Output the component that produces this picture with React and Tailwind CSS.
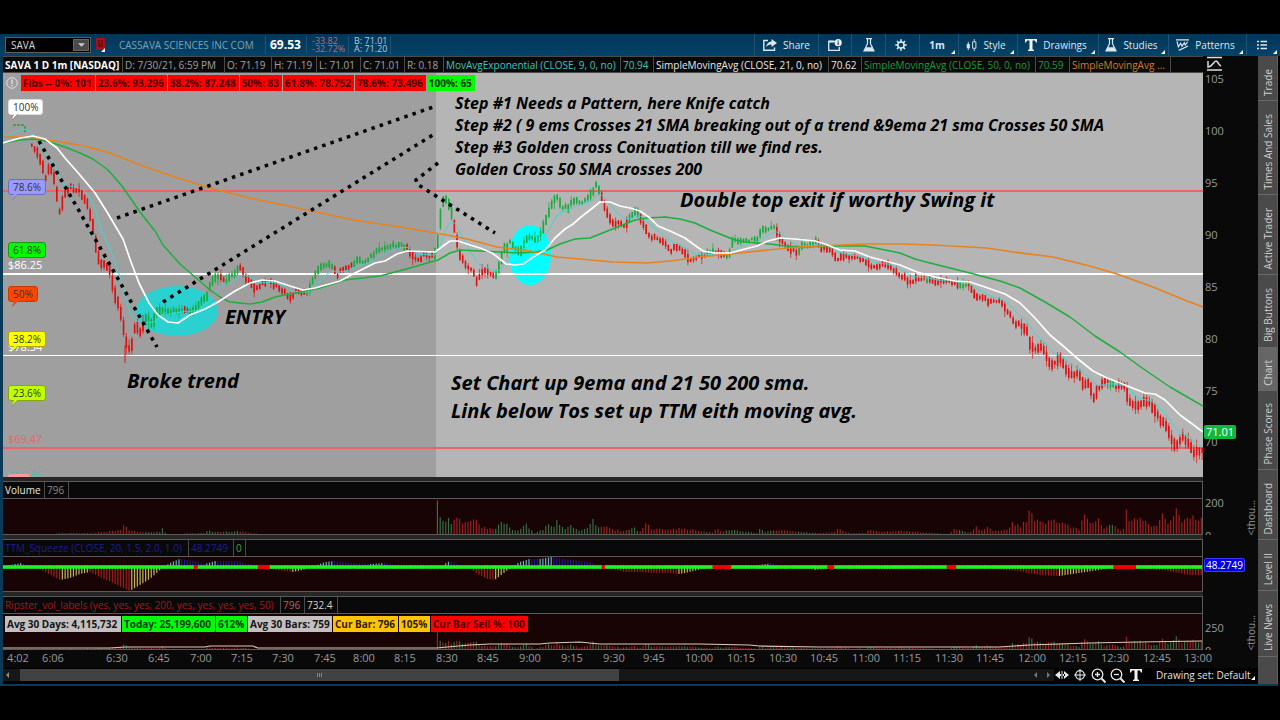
import React from 'react';

// distance between one-minute bars and the edges of the plot
const STEP = 2.78;
const LEFT = 3;
const RIGHT = 1203;

// [x, y, direction] of the price
const PRICE = [
  [32, 146, 'r'], [37, 152, 'r'], [41, 162, 'r'], [46, 178, 'r'], [50, 165, 'r'], [54, 178, 'r'], [57, 195, 'r'], [60, 213, 'r'],
  [64, 195, 'r'], [70, 187, 'r'], [80, 190, 'r'], [84, 200, 'r'], [88, 205, 'r'], [91, 218, 'r'], [94, 232, 'r'], [97, 253, 'r'],
  [101, 263, 'r'], [106, 265, 'r'], [110, 270, 'r'], [114, 290, 'r'], [119, 306, 'r'], [123, 325, 'r'], [126, 340, 'r'],
  [129, 350, 'r'], [132, 345, 'r'], [135, 325, 'r'], [141, 333, 'r'], [145, 320, 'g'], [150, 320, 'g'], [153, 325, 'g'],
  [157, 312, 'g'], [163, 311, 'g'], [175, 311, 'g'], [183, 309, 'r'], [190, 312, 'g'], [196, 308, 'g'], [200, 303, 'g'],
  [207, 296, 'g'], [210, 285, 'g'], [214, 279, 'g'], [220, 275, 'r'], [225, 283, 'g'], [230, 278, 'g'], [235, 273, 'g'],
  [241, 267, 'r'], [245, 278, 'r'], [250, 282, 'r'], [256, 290, 'r'], [262, 283, 'r'], [270, 280, 'r'], [278, 288, 'r'],
  [285, 293, 'r'], [290, 300, 'r'], [296, 290, 'r'], [302, 294, 'r'], [308, 290, 'g'], [313, 280, 'g'], [320, 268, 'g'],
  [328, 264, 'g'], [334, 270, 'r'], [337, 275, 'r'], [345, 268, 'r'], [353, 266, 'g'], [358, 258, 'g'], [364, 262, 'g'],
  [372, 256, 'g'], [380, 249, 'g'], [390, 246, 'g'], [400, 245, 'g'], [407, 247, 'r'], [411, 254, 'r'], [418, 260, 'r'],
  [425, 255, 'r'], [434, 256, 'g'], [438, 240, 'g'], [441, 215, 'g'], [444, 199, 'g'], [448, 202, 'g'], [452, 213, 'g'],
  [455, 230, 'r'], [460, 255, 'r'], [464, 263, 'r'], [469, 268, 'r'], [473, 270, 'r'], [477, 282, 'r'], [482, 272, 'r'],
  [487, 270, 'r'], [495, 277, 'g'], [499, 266, 'g'], [504, 250, 'g'], [510, 243, 'g'], [515, 247, 'g'], [520, 255, 'g'],
  [523, 244, 'g'], [530, 237, 'g'], [536, 240, 'g'], [542, 232, 'g'], [547, 216, 'g'], [552, 204, 'g'], [557, 198, 'g'],
  [562, 208, 'g'], [568, 208, 'g'], [573, 200, 'g'], [580, 203, 'g'], [588, 198, 'g'], [592, 193, 'g'], [596, 185, 'g'],
  [600, 190, 'r'], [604, 205, 'r'], [608, 215, 'r'], [613, 225, 'r'], [618, 222, 'r'], [625, 226, 'r'], [628, 221, 'g'],
  [632, 216, 'g'], [637, 210, 'g'], [640, 217, 'r'], [644, 227, 'r'], [650, 237, 'r'], [658, 238, 'r'], [665, 243, 'r'],
  [670, 252, 'r'], [675, 245, 'r'], [682, 250, 'r'], [690, 260, 'r'], [698, 257, 'r'], [707, 253, 'g'], [715, 252, 'r'],
  [727, 256, 'g'], [730, 251, 'g'], [733, 241, 'g'], [740, 241, 'g'], [745, 240, 'g'], [752, 240, 'g'], [757, 240, 'g'],
  [762, 230, 'g'], [770, 228, 'g'], [776, 228, 'r'], [779, 237, 'r'], [785, 245, 'r'], [792, 250, 'r'], [798, 252, 'g'],
  [803, 244, 'g'], [810, 246, 'g'], [817, 241, 'r'], [822, 248, 'r'], [832, 251, 'r'], [837, 259, 'r'], [845, 255, 'r'],
  [855, 258, 'r'], [865, 261, 'r'], [872, 268, 'r'], [878, 266, 'r'], [886, 264, 'r'], [893, 270, 'r'], [900, 274, 'r'],
  [910, 283, 'r'], [918, 278, 'r'], [926, 279, 'g'], [930, 278, 'r'], [935, 283, 'r'], [945, 280, 'r'], [955, 282, 'r'],
  [961, 287, 'g'], [967, 283, 'r'], [971, 288, 'r'], [976, 298, 'r'], [983, 298, 'r'], [990, 302, 'r'], [1000, 301, 'r'],
  [1005, 307, 'r'], [1010, 315, 'r'], [1015, 323, 'r'], [1020, 324, 'r'], [1027, 332, 'r'], [1031, 347, 'r'], [1037, 348, 'r'],
  [1043, 348, 'r'], [1050, 365, 'r'], [1055, 362, 'r'], [1060, 358, 'r'], [1065, 368, 'r'], [1072, 375, 'r'], [1078, 372, 'r'],
  [1084, 385, 'r'], [1090, 385, 'r'], [1093, 398, 'r'], [1098, 388, 'r'], [1104, 382, 'r'], [1110, 383, 'g'], [1116, 387, 'r'],
  [1124, 385, 'r'], [1129, 400, 'r'], [1137, 408, 'r'], [1144, 400, 'r'], [1150, 402, 'r'], [1157, 415, 'r'], [1165, 425, 'r'],
  [1172, 440, 'r'], [1176, 447, 'r'], [1182, 437, 'r'], [1188, 442, 'r'], [1194, 453, 'r'], [1198, 451, 'r'], [1202, 450, 'r'],
];

const VOLUME = [
  [3, 0], [55, 0], [58, 1], [95, 1], [98, 2], [110, 3], [122, 4], [124, 11], [128, 4], [140, 2], [160, 2], [163, 6], [166, 0],
  [205, 1], [208, 4], [212, 2], [222, 2], [240, 3], [250, 1], [270, 0], [435, 0], [437, 36], [440, 22], [444, 16], [452, 13],
  [456, 17], [460, 14], [470, 12], [476, 14], [480, 8], [490, 6], [495, 4], [503, 14], [508, 9], [515, 3], [520, 4], [526, 11],
  [530, 5], [535, 1], [542, 4], [550, 10], [554, 8], [557, 18], [561, 7], [566, 5], [572, 10], [576, 6], [580, 3], [588, 6],
  [593, 16], [598, 6], [605, 8], [612, 5], [625, 3], [634, 7], [640, 2], [647, 12], [651, 5], [660, 5], [670, 6], [690, 5],
  [700, 3], [714, 1], [717, 7], [720, 3], [735, 4], [758, 1], [761, 7], [764, 2], [778, 4], [790, 3], [815, 1], [835, 2],
  [838, 5], [845, 3], [850, 1], [867, 1], [870, 5], [880, 2], [900, 3], [920, 2], [950, 0], [955, 5], [962, 3], [972, 2],
  [976, 8], [982, 4], [988, 7], [995, 3], [1010, 5], [1014, 12], [1022, 8], [1028, 17], [1031, 24], [1037, 13], [1045, 11],
  [1052, 16], [1060, 11], [1080, 5], [1086, 24], [1092, 10], [1097, 17], [1105, 6], [1112, 11], [1120, 4], [1125, 5],
  [1127, 22], [1131, 11], [1137, 19], [1147, 11], [1157, 7], [1162, 21], [1169, 10], [1177, 25], [1182, 12], [1190, 16], [1203, 18],
];

const MOMENTUM = [
  [3, 0], [15, 3], [22, 4], [30, 1], [38, -1], [60, -13], [70, -11], [80, -7], [90, -5], [100, -10], [115, -17], [130, -24],
  [140, -18], [150, -12], [160, -3], [165, 1], [172, 5], [180, 8], [195, 6], [205, 3], [215, 6], [238, 6], [248, 3], [262, 1],
  [278, -3], [293, -5], [303, -3], [312, 0], [325, 5], [335, 6], [350, 4], [370, 3], [385, 4], [400, 1], [440, 0], [450, 6],
  [460, 2], [470, -1], [478, -7], [488, -12], [495, -13], [503, -7], [512, 0], [520, 5], [530, 8], [540, 8], [552, 10],
  [565, 8], [580, 6], [590, 5], [602, 0], [610, -1], [625, -5], [640, -5], [655, -6], [670, -6], [680, -7], [690, -5],
  [710, 0], [730, 2], [745, 2], [760, 2], [772, 4], [780, 1], [800, -1], [815, -3], [840, 0], [850, -2], [880, -2], [920, -1],
  [960, 0], [1000, -2], [1020, -4], [1040, -8], [1060, -9], [1080, -6], [1100, -3], [1115, 0], [1140, -1], [1165, -3],
  [1180, -6], [1190, -8], [1203, -8],
];

const SQUEEZED = [[194, 198], [259, 270], [602, 605], [713, 732], [829, 835], [949, 957], [1115, 1137]];

const SMA21 =
  '3,143 20,138 33,136 45,139 57,148 65,158 80,175 95,193 107,212 123,239 131,262 139,283 149,303 158,315 168,322 178,323 190,315 205,309 218,302 235,291 250,283 262,280 275,281 290,286 303,290 315,288 340,281 355,273 367,267 375,263 385,261 397,254 407,251 435,252 443,246 450,241 458,241 470,245 480,248 492,253 500,259 506,264 515,265 523,264 533,257 545,250 555,238 565,229 573,224 581,217 590,210 600,202 610,202 620,206 630,208 640,211 650,218 658,226 670,231 685,238 693,244 703,251 715,253 730,253 745,249 757,246 768,241 780,238 795,239 815,241 825,244 840,250 855,251 870,257 885,261 900,265 917,272 935,277 955,281 970,282 985,287 1005,294 1020,303 1035,318 1050,335 1062,345 1078,359 1093,371 1105,377 1120,383 1135,389 1145,393 1155,394 1165,400 1180,415 1195,426 1203,432';
const SMA50 =
  '3,143 20,140 35,139 50,142 65,147 80,153 93,159 108,170 122,186 140,212 155,231 163,245 180,264 195,277 210,290 220,297 230,302 250,304 262,302 275,297 295,293 320,288 345,280 380,276 410,268 438,260 450,253 460,250 480,251 500,252 520,253 535,252 547,250 560,244 575,239 590,238 605,232 620,226 635,220 647,218 665,217 680,219 695,223 710,230 725,236 735,240 745,242 770,244 785,246 800,247 840,246 865,246 885,250 900,253 915,259 930,263 950,268 970,273 1000,281 1020,288 1045,302 1070,317 1095,336 1120,352 1145,370 1170,387 1203,406';
const SMA200 =
  '3,137 30,137 55,141 85,146 110,153 140,165 175,177 210,188 250,198 307,210 353,220 400,227 447,235 467,239 497,247 530,251 557,257 580,259 613,262 647,263 670,261 700,257 730,254 767,250 800,247 840,245 867,244 900,244 933,245 987,248 1013,252 1053,257 1090,266 1117,274 1153,287 1187,301 1203,307';
const VOL_AVG =
  '3,649 110,649 125,648 205,648 210,647 253,647 258,649 437,649 470,646 490,645 540,645 550,644 580,643 600,645 700,645 750,646 760,647 820,648 1000,648 1030,646 1060,645 1090,644 1140,643 1203,642';

const noise = (i) => {
  const n = Math.sin(i * 127.1) * 43758.5453;
  return n - Math.floor(n);
};

const sample = (points, x) => {
  let i = 1;
  while (i < points.length - 1 && points[i][0] < x) i++;
  const [x0, y0] = points[i - 1];
  const [x1, y1] = points[i];
  const t = Math.min(1, Math.max(0, (x - x0) / (x1 - x0)));
  return y0 + (y1 - y0) * t;
};

const directionAt = (x) => {
  let dir = 'r';
  for (const p of PRICE) {
    if (p[0] <= x + 1) dir = p[2];
  }
  return dir;
};

const BARS = [];
for (let i = 0; LEFT + 1 + i * STEP < RIGHT; i++) BARS.push(LEFT + 1 + i * STEP);

const CANDLES = BARS.filter((x) => x > 30).map((x, i) => {
  const y = sample(PRICE, x);
  const slope = Math.abs(sample(PRICE, x + 2) - sample(PRICE, x - 2));
  const wild = x > 1020 || (x > 95 && x < 160) ? 2 : 0;
  const body = 0.8 + noise(i) * 2.4 + slope / 4 + wild * noise(i + 3);
  const wick = noise(i + 7) > 0.75 ? 6 : 2;
  return {
    x,
    y: y + (noise(i + 50) - 0.5) * 3,
    body,
    top: body + noise(i + 9) * (wick + wild),
    bottom: body + noise(i + 13) * (wick + wild),
    dir: directionAt(x),
  };
});

// 9 bar exponential average of the candles
const EMA9 = CANDLES.reduce((acc, c) => {
  const prev = acc.length ? acc[acc.length - 1][1] : 130;
  acc.push([c.x, prev + (c.y - prev) * 0.2]);
  return acc;
}, [])
  .map(([x, y]) => `${x.toFixed(1)},${y.toFixed(1)}`)
  .join(' ');

const infoCells = [
  { text: 'SAVA 1 D 1m [NASDAQ]', cls: 'text-white font-bold w-[120px]' },
  { text: 'D: 7/30/21, 6:59 PM', cls: 'text-[#a0a0a0] w-[102px]' },
  { text: 'O: 71.19', cls: 'text-[#a0a0a0] w-[47px]' },
  { text: 'H: 71.19', cls: 'text-[#a0a0a0] w-[45px]' },
  { text: 'L: 71.01', cls: 'text-[#a0a0a0] w-[44px]' },
  { text: 'C: 71.01', cls: 'text-[#a0a0a0] w-[44px]' },
  { text: 'R: 0.18', cls: 'text-[#a0a0a0] w-[39px]' },
  { text: 'MovAvgExponential (CLOSE, 9, 0, no)', cls: 'text-[#3fc4bd] w-[177px]' },
  { text: '70.94', cls: 'text-[#3fc4bd] w-[33px]' },
  { text: 'SimpleMovingAvg (CLOSE, 21, 0, no)', cls: 'text-[#e8e8e8] w-[175px]' },
  { text: '70.62', cls: 'text-[#e8e8e8] w-[33px]' },
  { text: 'SimpleMovingAvg (CLOSE, 50, 0, no)', cls: 'text-[#1f9a3c] w-[174px]' },
  { text: '70.59', cls: 'text-[#1f9a3c] w-[34px]' },
  { text: 'SimpleMovingAvg ...', cls: 'text-[#d07c22] w-[101px]' },
];

const fibs = [
  { text: 'Fibs -- 0%: 101', cls: 'bg-[#fe0000] text-[#4a0000]' },
  { text: '23.6%: 93.296', cls: 'bg-[#fe0000] text-[#4a0000]' },
  { text: '38.2%: 87.248', cls: 'bg-[#fe0000] text-[#4a0000]' },
  { text: '50%: 83', cls: 'bg-[#fe0000] text-[#4a0000]' },
  { text: '61.8%: 78.752', cls: 'bg-[#fe0000] text-[#4a0000]' },
  { text: '78.6%: 73.496', cls: 'bg-[#fe0000] text-[#4a0000]' },
  { text: '100%: 65', cls: 'bg-[#00fe00] text-[#063806]' },
];

const bubbles = [
  { text: '100%', cls: 'top-[26px] bg-white border-[#dddddd]', fill: '#ffffff' },
  { text: '78.6%', cls: 'top-[106px] bg-[#9a9afc] border-[#6d6dc4]', fill: '#9a9afc' },
  { text: '61.8%', cls: 'top-[169px] bg-[#00fa00] border-[#159a15]', fill: '#00fa00' },
  { text: '50%', cls: 'top-[213px] bg-[#ff4500] border-[#c83a06]', fill: '#ff4500' },
  { text: '38.2%', cls: 'top-[258px] bg-[#ffff00] border-[#b0a800]', fill: '#ffff00' },
  { text: '23.6%', cls: 'top-[312px] bg-[#c0ff00] border-[#84a810]', fill: '#c0ff00' },
];

const tabs = [
  { name: 'Trade', cls: 'h-[45px]' },
  { name: 'Times And Sales', cls: 'h-[94px]' },
  { name: 'Active Trader', cls: 'h-[80px]' },
  { name: 'Big Buttons', cls: 'h-[73px]' },
  { name: 'Chart', cls: 'h-[43px]', active: true },
  { name: 'Phase Scores', cls: 'h-[79px]' },
  { name: 'Dashboard', cls: 'h-[70px]' },
  { name: 'Level II', cls: 'h-[51px]' },
  { name: 'Live News', cls: 'h-[66px]' },
];

const times = [
  ['4:02', 18], ['6:06', 53], ['6:30', 117], ['6:45', 159], ['7:00', 201], ['7:15', 242], ['7:30', 283], ['7:45', 325],
  ['8:00', 364], ['8:15', 405], ['8:30', 447], ['8:45', 488], ['9:00', 530], ['9:15', 572], ['9:30', 614], ['9:45', 654],
  ['10:00', 699], ['10:15', 741], ['10:30', 783], ['10:45', 824], ['11:00', 866], ['11:15', 907], ['11:30', 949],
  ['11:45', 990], ['12:00', 1032], ['12:15', 1073], ['12:30', 1115], ['12:45', 1157], ['13:00', 1198],
];

const prices = [105, 100, 95, 90, 85, 80, 75, 70];

const Corner = () => (
  <svg viewBox="0 0 4 4" className="absolute right-[3px] bottom-[2px] size-1" aria-hidden="true">
    <path d="M4 0V4H0Z" fill="#fff" />
  </svg>
);

const ShareIcon = () => (
  <svg viewBox="0 0 14 12" className="w-[14px] h-3" fill="none" stroke="#dbe7ef" aria-hidden="true">
    <path d="M5 1.500H.8v9.700h10.700V8.500" strokeWidth="1.400" />
    <path d="M8.500 0L14 4L8.500 8V5.600C6 5.500 4.300 6.300 3.200 8.500C3.400 4.800 5.300 2.600 8.500 2.400z" fill="#dbe7ef" stroke="none" />
  </svg>
);

const FlaskIcon = () => (
  <svg viewBox="0 0 12 14" className="w-3 h-[14px]" fill="none" stroke="#dbe7ef" aria-hidden="true">
    <path d="M3 .7h6M4.500 .7v5L1 13h10L7.500 5.700v-5" strokeWidth="1.200" />
    <path d="M3 9.200h6l2 3.800H1z" fill="#dbe7ef" stroke="none" />
  </svg>
);

const GearIcon = () => (
  <svg viewBox="0 0 14 14" className="size-3" fill="none" stroke="#e6eef4" aria-hidden="true">
    <circle cx="7" cy="7" r="3.600" strokeWidth="1.800" />
    <path d="M7 .3v3M7 10.700v3M.3 7h3M10.700 7h3M2.300 2.300l2 2M9.700 9.700l2 2M2.300 11.700l2-2M9.700 4.300l2-2" strokeWidth="1.800" />
  </svg>
);

const NoteIcon = () => (
  <svg viewBox="0 0 14 12" className="w-[14px] h-3" fill="none" stroke="#dbe7ef" aria-hidden="true">
    <path d="M7 2.500H.7v8.800h10.600V8" strokeWidth="1.300" />
    <path d="M.7 2.500h5" strokeWidth="2" />
    <circle cx="10.200" cy="3.700" r="3.600" fill="#e6eef4" stroke="none" />
    <path d="M10.200 1.500v1M10.200 3.200v2.600" stroke="#053c5f" strokeWidth="1.200" />
  </svg>
);

const StyleIcon = () => (
  <svg viewBox="0 0 12 14" className="w-[11px] h-[13px]" fill="none" stroke="#dbe7ef" aria-hidden="true">
    <path d="M2.500 3v9M9 0v3M9 10v3" />
    <path d="M.8 5.500h3.400v4.500H.8z" fill="#dbe7ef" stroke="none" />
    <path d="M7.200 3h3.600v7H7.200z" />
  </svg>
);

const TextIcon = () => (
  <svg viewBox="0 0 12 12" className="size-3" fill="#f2f2f2" aria-hidden="true">
    <path d="M0 0h12v3.600h-1.100C10.700 2 10.200 1.400 8.600 1.400H7.500v8.400c0 .8.4 1 1.500 1V12H3v-1.200c1.100 0 1.500-.2 1.500-1V1.400H3.400C1.800 1.400 1.300 2 1.100 3.600H0z" />
  </svg>
);

const PatternIcon = () => (
  <svg viewBox="0 0 14 13" className="w-[13px] h-3" fill="none" stroke="#dbe7ef" aria-hidden="true">
    <path d="M0 1h14M3 12.300L13 7.500" strokeWidth="1.300" />
    <path d="M1 2.500l1.500 6L5 4.500l1.500 3.300L9 4l1 2.500L12.500 3" strokeWidth="1.300" />
  </svg>
);

const ListIcon = () => (
  <svg viewBox="0 0 10 10" className="size-[10px]" stroke="#dbe7ef" aria-hidden="true">
    <path d="M0 1.500h2M3.500 1.500H10M0 5h2M3.500 5H10M0 8.500h2M3.500 8.500H10" strokeWidth="1.300" />
  </svg>
);

const tools = [
  { label: 'Share', cls: 'w-[64px]', icon: <ShareIcon />, text: 'Share' },
  { label: 'Notes', cls: 'w-[33px]', icon: <NoteIcon /> },
  { label: 'Studies quick list', cls: 'w-[34px]', icon: <FlaskIcon /> },
  { label: 'Settings', cls: 'w-[34px] pr-1', icon: <GearIcon /> },
  { label: 'Time frame', cls: 'w-[39px] pr-1 font-bold', text: '1m', menu: true },
  { label: 'Style', cls: 'w-[59px] pr-1', icon: <StyleIcon />, text: 'Style', menu: true },
  { label: 'Drawings', cls: 'w-[81px] pr-1', icon: <TextIcon />, text: 'Drawings', menu: true },
  { label: 'Studies', cls: 'w-[70px] pr-1', icon: <FlaskIcon />, text: 'Studies', menu: true },
  { label: 'Patterns', cls: 'w-[78px] pr-1', icon: <PatternIcon />, text: 'Patterns', menu: true },
  { label: 'Menu', cls: 'w-[34px] pr-1', icon: <ListIcon />, menu: true },
];

const Header = () => (
  <header className="flex h-[22px] items-center bg-linear-to-b from-[#033656] to-[#04436a]">
    <div className="ml-[5px] flex h-4 w-[86px] items-center border border-[#5d5d5d] bg-black">
      <input
        aria-label="Symbol"
        defaultValue="SAVA"
        className="w-0 flex-1 bg-transparent pl-[5px] text-[10px] text-[#d8d8d8] outline-none"
      />
      <button aria-label="Choose symbol" className="mr-px flex h-3 w-4 items-center justify-center border border-[#666] bg-[#4a4a4a]">
        <svg viewBox="0 0 8 4" className="w-[7px] h-1" fill="#ccc"><path d="M0 0h8L4 4z" /></svg>
      </button>
    </div>
    <button aria-label="Link color" className="relative ml-1 h-[18px] w-[15px]">
      <svg viewBox="0 0 15 18" className="size-full">
        <rect x="1" y="2" width="9" height="12" rx="1" fill="#a11219" />
        <path d="M4 4v5a1.500 1.500 0 0 0 3 0V4" fill="none" stroke="#5a0a10" strokeWidth="1.300" />
        <path d="M10 12v4H6z" fill="#fff" />
      </svg>
    </button>
    <span className="ml-[9px] w-[146px] text-[10px] whitespace-nowrap text-[#7fa0b5]">CASSAVA SCIENCES INC COM</span>
    <span className="flex h-[18px] w-[42px] items-center border-x border-[#1f5273] pl-1 text-[12px] font-bold text-white">69.53</span>
    <span className="flex h-[18px] w-[42px] flex-col justify-center border-r border-[#1f5273] pl-[5px] text-[9px] leading-[8px] text-[#b96a88]">
      <span>-33.82</span>
      <span>-32.72%</span>
    </span>
    <span className="flex h-[18px] w-[42px] flex-col justify-center border-r border-[#1f5273] pl-[5px] text-[9px] leading-[8px] text-[#b9cbd8]">
      <span>B: 71.01</span>
      <span>A: 71.20</span>
    </span>
    <div className="flex-1" />
    {tools.map((t) => (
      <button
        key={t.label}
        aria-label={t.label}
        className={`relative flex h-full items-center justify-center gap-[6px] border-l border-[#1f5273] text-[10px] text-[#dbe7ef] ${t.cls}`}
      >
        {t.icon}
        {t.text && <span>{t.text}</span>}
        {t.menu && <Corner />}
      </button>
    ))}
  </header>
);

const PriceChart = () => (
  <svg viewBox="3 73 1200 404" preserveAspectRatio="none" className="absolute inset-0 size-full" aria-label="SAVA price chart">
    <rect x="3" y="73" width="433" height="404" fill="#9f9f9f" />
    <rect x="436" y="73" width="767" height="404" fill="#b5b5b5" />
    <ellipse cx="177" cy="311" rx="41" ry="25" fill="#2bd0d0" />
    <ellipse cx="530" cy="255" rx="21" ry="30" fill="#00ffff" />
    <path d="M3 191h1200M3 448h1200" stroke="#ea6468" strokeWidth="2" />
    <path d="M3 274h1200" stroke="#fff" strokeWidth="2" />
    <path d="M3 355.500h1200" stroke="#fff" strokeWidth="1" />
    {CANDLES.map((c) => {
      const color = c.dir === 'g' ? '#12ad3a' : '#e01010';
      return (
        <g key={c.x}>
          <path d={`M${c.x} ${c.y - c.top}V${c.y + c.bottom}`} stroke={color} strokeWidth="0.700" />
          <rect x={c.x - 0.8} y={c.y - c.body} width="1.600" height={c.body * 2} fill={color} />
        </g>
      );
    })}
    <path d="M125 345v18" stroke="#e01010" />
    <path d="M13 125h11M25 126v6" stroke="#17a83c" strokeWidth="1.500" strokeDasharray="3 1" />
    <g fill="none" strokeLinejoin="round">
      <polyline points="3,137 15,132 24,129 32,132" stroke="#3fd6d2" />
      <polyline points={EMA9} stroke="#3fd6d2" />
      <polyline points={SMA50} stroke="#1fae3c" strokeWidth="1.500" />
      <polyline points={SMA200} stroke="#e8821e" strokeWidth="1.700" />
      <polyline points={SMA21} stroke="#fff" strokeWidth="1.700" />
    </g>
    <g fill="none" stroke="#000" strokeWidth="3.500" strokeDasharray="3.500 5.200">
      <path d="M117 218L436 106" />
      <path d="M163 302L436 133" />
      <path d="M438 163L416 180L417 184L495 233" />
      <path d="M39 141L157 347" />
    </g>
  </svg>
);

const VolumeBars = ({ base, top, height, scale, mixed }) => (
  <svg viewBox={`3 ${top} 1200 ${height}`} preserveAspectRatio="none" className="block size-full" aria-hidden="true">
    {BARS.map((x, i) => {
      const h = sample(VOLUME, x) * (0.75 + noise(i) * 0.4) * scale;
      if (h < 0.5) return null;
      const green = mixed ? noise(i + 31) > 0.6 : directionAt(x) === 'g';
      return <rect key={x} x={x - 0.5} y={base - h} width="1.200" height={h} fill={green ? '#356e43' : '#98211f'} />;
    })}
    {mixed && <polyline points={VOL_AVG} fill="none" stroke="#d8ccb8" strokeWidth="1.200" />}
  </svg>
);

const momentumColor = (x, v) => {
  const rising = sample(MOMENTUM, x + 2) > sample(MOMENTUM, x - 2);
  if (v > 0) return rising ? '#5fb4c8' : '#1a1a96';
  return rising ? '#c3b75a' : '#9c1f1c';
};

const SqueezePlot = () => (
  <svg viewBox="3 557 1200 34" preserveAspectRatio="none" className="block size-full" aria-hidden="true">
    {BARS.map((x) => {
      const v = sample(MOMENTUM, x);
      return <rect key={x} x={x - 0.6} y={v > 0 ? 567 - v : 567} width="1.200" height={Math.abs(v)} fill={momentumColor(x, v)} />;
    })}
    <path d="M4 567H1201" stroke="#1fd81f" strokeWidth="2.500" />
    {BARS.map((x) => (
      <circle key={x} cx={x} cy="567" r="2" fill={SQUEEZED.some(([a, b]) => x >= a && x <= b) ? '#f00000' : '#22f022'} />
    ))}
    {SQUEEZED.map(([a, b]) => (
      <path key={a} d={`M${a} 567H${b}`} stroke="#f00000" strokeWidth="3.500" />
    ))}
  </svg>
);

const Cells = ({ cells }) => (
  <div className="flex h-4 items-center text-[10px] leading-4 whitespace-nowrap">
    {cells.map(([text, cls]) => (
      <span key={text} className={`h-full border-r border-[#4a4a4a] pl-[2px] ${cls}`}>{text}</span>
    ))}
  </div>
);

const Panel = ({ cells, plot, axis, plotCls }) => (
  <section className="flex">
    <div className="min-w-0 flex-1 border-t border-r border-[#5a5a5a] bg-[#090909]">
      <Cells cells={cells} />
      <div className={`border-y border-[#5a5a5a] bg-[#180404] ${plotCls}`}>{plot}</div>
    </div>
    <div className="relative w-[55px] text-[11px] text-[#9a9a9a]">{axis}</div>
  </section>
);

const Gap = () => <div className="mr-[55px] h-1 bg-[#262626]" />;

const ThouLabel = () => (
  <span className="absolute right-0 bottom-0 rotate-180 text-[10px] leading-[14px] [writing-mode:vertical-rl]">{'<thou...'}</span>
);

const volLabels = [
  { text: 'Avg 30 Days: 4,115,732', cls: 'bg-[#c4c0c2] text-[#141414] w-[116px]' },
  { text: 'Today: 25,199,600', cls: 'bg-[#00fc06] text-[#06400a] w-[93px]' },
  { text: '612%', cls: 'bg-[#00fc06] text-[#06400a] w-[31px]' },
  { text: 'Avg 30 Bars: 759', cls: 'bg-[#c4c0c2] text-[#141414] w-[84px]' },
  { text: 'Cur Bar: 796', cls: 'bg-[#ffc300] text-[#2c2000] w-[65px]' },
  { text: '105%', cls: 'bg-[#ffc300] text-[#2c2000] w-[31px]' },
  { text: 'Cur Bar Sell %: 100', cls: 'bg-[#fe0000] text-[#4a0000] w-[97px]' },
];

const Footer = () => (
  <footer className="flex h-[14px] items-center bg-black text-[#e0e0e0]">
    <div className="flex h-3 flex-1 items-center bg-[#171717]">
      <button aria-label="Scroll left" className="flex w-[17px] justify-start pl-[3px]">
        <svg viewBox="0 0 3 6" className="w-[3px] h-[6px]" fill="#888"><path d="M3 0v6L0 3z" /></svg>
      </button>
      <div className="flex h-full w-[57%] items-center justify-center gap-px bg-[#424242]">
        <i className="h-1 w-px bg-[#888]" />
        <i className="h-1 w-px bg-[#888]" />
        <i className="h-1 w-px bg-[#888]" />
      </div>
      <div className="flex-1" />
      <button aria-label="Step left" className="mr-[10px]">
        <svg viewBox="0 0 3 6" className="w-[3px] h-[6px]" fill="#777"><path d="M3 0v6L0 3z" /></svg>
      </button>
      <button aria-label="Step right" className="mr-1">
        <svg viewBox="0 0 3 6" className="w-[3px] h-[6px]" fill="#777"><path d="M0 0v6l3-3z" /></svg>
      </button>
    </div>
    <div className="relative flex h-full w-[204px] items-center">
      <button aria-label="Pan" className="w-[18px]">
        <svg viewBox="0 0 14 10" className="ml-px h-[10px] w-[14px]" fill="#e8e8e8">
          <path d="M0 5l5-4v8zM14 5L9 1v8zM4 4h6v2H4z" />
          <path d="M7 0v10" stroke="#000" strokeWidth="2" />
          <path d="M7 1v8" stroke="#e8e8e8" strokeWidth="1" />
        </svg>
      </button>
      <button aria-label="Crosshair" className="w-[17px]">
        <svg viewBox="0 0 12 12" className="ml-[2px] size-3" fill="none" stroke="#e8e8e8">
          <circle cx="6" cy="6" r="4.300" strokeWidth="1.200" />
          <path d="M6 0v12M0 6h12" />
        </svg>
      </button>
      <button aria-label="Zoom in" className="w-[19px]">
        <svg viewBox="0 0 15 15" className="ml-[2px] size-[15px]" fill="none" stroke="#e8e8e8" strokeWidth="1.300">
          <circle cx="6.500" cy="6.500" r="5.300" />
          <path d="M10.500 10.500l4 4" strokeWidth="2" />
          <path d="M4 6.500h5M6.500 4v5" />
        </svg>
      </button>
      <button aria-label="Zoom out" className="w-[18px]">
        <svg viewBox="0 0 15 15" className="ml-[2px] size-[15px]" fill="none" stroke="#e8e8e8" strokeWidth="1.300">
          <circle cx="6.500" cy="6.500" r="5.300" />
          <path d="M10.500 10.500l4 4" strokeWidth="2" />
          <path d="M4 6.500h5" />
        </svg>
      </button>
      <button aria-label="Text tool" className="ml-1"><TextIcon /></button>
      <button className="ml-[14px] text-[10px] leading-[14px] whitespace-nowrap">Drawing set: Default</button>
      <Corner />
    </div>
  </footer>
);

export default function App() {
  return (
    <div className="flex min-h-screen flex-col bg-black py-[34px] font-['Open_Sans',sans-serif]">
      <Header />
      <div className="mr-[2px] flex flex-1 border-b-2 border-l-[3px] border-[#0a3a57] bg-[#090909]">
        <main className="flex min-w-0 flex-1 flex-col">
          <div className="flex h-[17px] text-[10px] leading-4 whitespace-nowrap">
            <div className="flex min-w-0 flex-1 border-y border-[#4a4a4a]">
              {infoCells.map((c) => (
                <span key={c.text} className={`shrink-0 border-r border-[#4a4a4a] pl-[2px] ${c.cls}`}>{c.text}</span>
              ))}
            </div>
            <div className="w-[55px] pl-1">
              <svg viewBox="0 0 15 15" className="size-[15px]" fill="none" stroke="#e0e0e0" strokeWidth="1.500" aria-hidden="true">
                <path d="M0 1.500h15M0 14h15M1 5v6C5 11 7 5 9 5s2 4 5 5" />
              </svg>
            </div>
          </div>

          <section className="flex min-h-[404px] flex-1">
            <div className="relative min-w-0 flex-1 overflow-hidden">
              <PriceChart />

              <div className="relative flex items-center pt-[2px] pl-[3px] text-[10px] leading-4 font-bold">
                <svg viewBox="0 0 12 12" className="mr-[3px] size-3" fill="none" stroke="#ddd" aria-hidden="true">
                  <circle cx="6" cy="6" r="5.300" />
                  <path d="M6 2.500v4.500M6 8v1.500" strokeWidth="1.500" />
                </svg>
                {fibs.map((f) => (
                  <span key={f.text} className={`mr-px pr-[3px] pl-[2px] whitespace-nowrap ${f.cls}`}>{f.text}</span>
                ))}
              </div>

              <span className="absolute top-[184px] left-[5px] text-[11px] leading-4 text-white">$86.25</span>
              <span className="absolute top-[266px] left-[5px] text-[11px] leading-4 text-white">$78.34</span>
              <span className="absolute top-[358px] left-[5px] text-[11px] leading-4 text-[#e4686c]">$69.47</span>
              <span className="absolute top-[394px] left-[5px] text-[11px] leading-4 text-[#3fc4bd]">$65.35</span>
              <span className="absolute top-[401px] left-[5px] h-3 w-[22px] rounded-[3px] bg-[#ff9a9a]" />
              {bubbles.map((b) => (
                <span key={b.text} className={`absolute left-[5px] rounded-[3px] border px-1 text-[10px] leading-[14px] text-[#333] ${b.cls}`}>
                  {b.text}
                  <svg viewBox="0 0 8 6" className="absolute top-[14px] left-[2px] h-[6px] w-2" aria-hidden="true">
                    <path d="M7 0L1 6L3 0z" fill={b.fill} />
                    <path d="M7 0L1 6" stroke="#777" strokeWidth=".7" />
                  </svg>
                </span>
              ))}

              <p className="absolute top-[19px] left-[452px] text-[16px] leading-[22px] font-bold whitespace-nowrap text-black italic">
                Step #1 Needs a Pattern, here Knife catch<br />
                Step #2 ( 9 ems Crosses 21 SMA breaking out of a trend &amp;9ema 21 sma Crosses 50 SMA<br />
                Step #3 Golden cross Conituation till we find res.<br />
                Golden Cross 50 SMA crosses 200
              </p>
              <p className="absolute top-[113px] left-[677px] text-[20px] leading-7 font-bold whitespace-nowrap text-black italic">Double top exit if worthy Swing it</p>
              <p className="absolute top-[230px] left-[222px] text-[20px] leading-7 font-bold text-black italic">ENTRY</p>
              <p className="absolute top-[294px] left-[124px] text-[20px] leading-7 font-bold whitespace-nowrap text-black italic">Broke trend</p>
              <p className="absolute top-[296px] left-[448px] text-[20px] leading-7 font-bold whitespace-nowrap text-black italic">
                Set Chart up 9ema and 21 50 200 sma.<br />
                Link below Tos set up TTM eith moving avg.
              </p>
            </div>
            <div className="relative w-[55px] text-[11px] leading-4 text-[#9a9a9a]">
              {prices.map((p, i) => (
                <span key={p} className="absolute left-[2px] -translate-y-1/2" style={{ top: `${1.5 + i * 12.85}%` }}>{p}</span>
              ))}
              <span className="absolute top-[352px] left-px rounded-[2px] bg-[#10b83c] px-[2px] text-[11px] leading-[14px] text-white">71.01</span>
            </div>
          </section>

          <Gap />
          <Panel
            cells={[['Volume', 'text-[#e8e8e8] w-[42px]'], ['796', 'text-[#8a8a8a] w-6']]}
            plotCls="h-[37px]"
            plot={<VolumeBars base={534} top={499} height={35} scale={1} />}
            axis={
              <>
                <span className="absolute top-[14px] left-[2px] leading-4">200</span>
                <span className="absolute bottom-0 left-[2px] h-1 overflow-hidden leading-[10px]">0</span>
                <ThouLabel />
              </>
            }
          />
          <Gap />
          <Panel
            cells={[
              ['TTM_Squeeze (CLOSE, 20, 1.5, 2.0, 1.0)', 'text-[#1c1c96] w-[186px]'],
              ['48.2749', 'text-[#1c1c96] w-[45px]'],
              ['0', 'text-[#3ca53c] w-3'],
            ]}
            plotCls="h-[36px]"
            plot={<SqueezePlot />}
            axis={<span className="absolute top-[19px] left-px rounded-[2px] border border-[#3a3aff] bg-[#0000e6] px-px text-[10px] leading-[12px] text-white">48.2749</span>}
          />
          <Gap />
          <Panel
            cells={[
              ['Ripster_vol_labels (yes, yes, yes, 200, yes, yes, yes, yes, 50)', 'text-[#a31818] w-[278px]'],
              ['796', 'text-[#b86060] w-6'],
              ['732.4', 'text-[#ddd5c0] w-[33px]'],
            ]}
            plotCls="h-[37px]"
            plot={
              <div className="relative h-full">
                <div className="absolute top-[2px] left-[2px] flex gap-px text-[10px] leading-4 font-bold whitespace-nowrap">
                  {volLabels.map((l) => (
                    <span key={l.text} className={`pl-[2px] ${l.cls}`}>{l.text}</span>
                  ))}
                </div>
                <VolumeBars base={650} top={615} height={35} scale={0.5} mixed />
              </div>
            }
            axis={
              <>
                <span className="absolute top-[24px] left-[2px] leading-4">250</span>
                <span className="absolute bottom-0 left-[2px] h-1 overflow-hidden leading-[10px]">0</span>
                <ThouLabel />
              </>
            }
          />

          <div className="relative mr-[55px] h-[18px] text-[11px] leading-4 text-[#9a9a9a]">
            {times.map(([label, x]) => (
              <span key={label} className="absolute -translate-x-1/2" style={{ left: `${(x - LEFT) / 12}%` }}>{label}</span>
            ))}
          </div>
          <Footer />
          <div className="h-[2px] bg-black" />
        </main>

        <nav className="flex w-5 flex-col border-r border-[#2f6a8c] bg-[#4a4a4a]">
          {tabs.map((t) => (
            <button
              key={t.name}
              className={`flex items-center justify-center border-b border-[#6a6a6a] pt-2 text-[10px] text-[#cfcfcf] ${t.cls} ${t.active ? 'bg-[#666]' : ''}`}
            >
              <span className="rotate-180 leading-4 whitespace-nowrap [writing-mode:vertical-rl]">{t.name}</span>
            </button>
          ))}
        </nav>
      </div>
    </div>
  );
}
